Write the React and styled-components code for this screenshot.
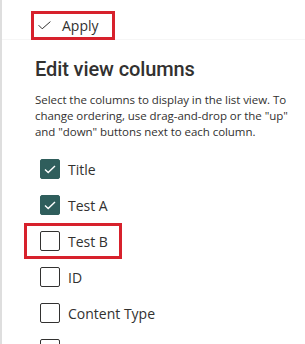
import React from 'react';
import styled, { createGlobalStyle } from 'styled-components';

const GlobalStyle = createGlobalStyle`
  html, body {
    margin: 0;
    padding: 0;
    background: #fff;
  }
  body {
    font-family: "Open Sans", "Noto Sans", "Liberation Sans", sans-serif;
    color: #323130;
  }
`;

const Panel = styled.div`
  height: 100vh;
  border-left: 2px solid #dedede;
  box-sizing: border-box;
  overflow: hidden;
`;

const CommandBar = styled.div`
  display: flex;
  align-items: flex-start;
  height: 40px;
  padding: 11px 0 0 29px;
  box-sizing: border-box;
  border-bottom: 1px solid #f6f6f6;
`;

const CommandButton = styled.button`
  display: flex;
  align-items: center;
  gap: 11px;
  height: 29px;
  padding: 0 13px 0 4px;
  box-sizing: border-box;
  border: 3px solid ${p => (p.$highlight ? '#d7212c' : 'transparent')};
  background: #fff;
  font-family: inherit;
  font-size: 14px;
  color: #323130;
  cursor: pointer;
`;

const Body = styled.div`
  padding: 0 14px 0 33px;
`;

const Heading = styled.h2`
  margin: 15px 0 0;
  font-family: Roboto, "Open Sans", sans-serif;
  font-size: 20px;
  line-height: 28px;
  font-weight: 500;
  letter-spacing: -0.1px;
`;

const Description = styled.p`
  margin: 9px 0 0;
  font-size: 11.5px;
  line-height: 16px;
  letter-spacing: -0.05px;
`;

const List = styled.div`
  margin: 11px 0 0 -11px;
  display: flex;
  flex-direction: column;
`;

const Row = styled.label`
  display: flex;
  align-items: center;
  width: fit-content;
  height: 36px;
  padding: 0 11px 0 13px;
  box-sizing: border-box;
  border: 3px solid ${p => (p.$highlight ? '#d7212c' : 'transparent')};
  font-size: 14px;
  cursor: pointer;
`;

const Box = styled.span`
  display: flex;
  align-items: center;
  justify-content: center;
  width: 20px;
  height: 20px;
  box-sizing: border-box;
  border-radius: 2px;
  border: 1px solid ${p => (p.$checked ? '#2f5e5c' : '#323130')};
  background: ${p => (p.$checked ? '#2f5e5c' : '#fff')};
  margin-right: 8px;
`;

const columns = [
  { name: 'Title', checked: true },
  { name: 'Test A', checked: true },
  { name: 'Test B', checked: false, highlight: true },
  { name: 'ID', checked: false },
  { name: 'Content Type', checked: false },
  { name: 'Modified', checked: false },
];

function CheckIcon() {
  return (
    <svg width="13" height="9" viewBox="0 0 13 9">
      <path d="M0.6 4.2 L4.2 7.8 L12.4 0.6" fill="none" stroke="#323130" strokeWidth="1" />
    </svg>
  );
}

function BoxTick() {
  return (
    <svg width="12" height="9" viewBox="0 0 12 9">
      <path d="M1 4.6 L4.2 7.6 L11 1" fill="none" stroke="#fff" strokeWidth="1.4" />
    </svg>
  );
}

export default function App() {
  return (
    <>
      <GlobalStyle />
      <Panel>
        <CommandBar>
          <CommandButton $highlight>
            <CheckIcon />
            <span>Apply</span>
          </CommandButton>
        </CommandBar>
        <Body>
          <Heading>Edit view columns</Heading>
          <Description>
            Select the columns to display in the list view. To change ordering, use drag-and-drop or the "up" and "down" buttons next to each column.
          </Description>
          <List>
            {columns.map(c => (
              <Row key={c.name} $highlight={c.highlight}>
                <Box $checked={c.checked}>{c.checked && <BoxTick />}</Box>
                {c.name}
              </Row>
            ))}
          </List>
        </Body>
      </Panel>
    </>
  );
}
